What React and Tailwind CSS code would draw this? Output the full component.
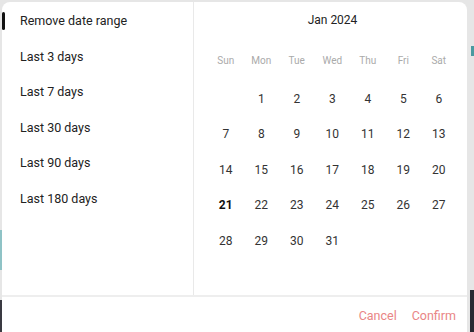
import React from 'react';

const presets = ['Remove date range', 'Last 3 days', 'Last 7 days', 'Last 30 days', 'Last 90 days', 'Last 180 days'];
const weekdays = ['Sun', 'Mon', 'Tue', 'Wed', 'Thu', 'Fri', 'Sat'];

export default function App() {
  // Jan 2024 starts on a Monday
  const cells = [null, ...Array.from({ length: 31 }, (_, i) => i + 1)];

  return (
    <div className="relative w-[474px] h-[332px] overflow-hidden bg-[#e6e6e6] pl-[2px] pt-[2px]" style={{ fontFamily: 'Roboto, "Noto Sans", sans-serif' }}>
      {/* bits of the page behind the dialog */}
      <div className="absolute right-0 top-[46px] w-[3px] h-[10px] bg-[#4a9aa0]" />
      <div className="absolute right-0 top-[290px] w-[4px] h-[42px] bg-[#2a2a32]" />
      <div className="absolute left-0 top-[230px] w-[2px] h-[40px] bg-[#8fc3c6]" />
      <div className="absolute left-0 top-[300px] w-[2px] h-[32px] bg-[#3a3a42]" />

      <div className="relative w-[465px] h-[340px] bg-white rounded-[8px] flex flex-col">
        <div className="flex h-[293px]">
          <div className="relative w-[192px] pt-[2px] border-r border-[#e9e9e9]">
            <div className="absolute left-0 top-[10px] w-[3px] h-[18px] rounded-full bg-[#111]" />
            {presets.map((p) => (
              <div key={p} className="h-[35.5px] flex items-center pl-[18px] text-[12.5px] text-[#222]">
                {p}
              </div>
            ))}
          </div>

          <div className="flex-1 pl-[14px]">
            <div className="w-[249px] h-[36px] flex items-center justify-center text-[12px] text-[#222]">Jan 2024</div>
            <div className="grid grid-cols-[repeat(7,35.5px)] h-[43px] pt-[2px] items-center">
              {weekdays.map((d) => (
                <div key={d} className="text-center text-[10px] text-[#aaa]">{d}</div>
              ))}
            </div>
            <div className="grid grid-cols-[repeat(7,35.5px)] auto-rows-[35.5px] items-center">
              {cells.map((d, i) => (
                <div
                  key={i}
                  className={d === 21 ? 'text-center text-[12px] font-bold text-[#111]' : 'text-center text-[12px] text-[#333]'}
                >
                  {d}
                </div>
              ))}
            </div>
          </div>
        </div>

        <div className="border-t-2 border-[#eeeeee] h-[40px] flex items-center justify-end gap-[15px] pr-[11px] text-[12.5px] text-[#e98585]">
          <button>Cancel</button>
          <button>Confirm</button>
        </div>
      </div>
    </div>
  );
}
